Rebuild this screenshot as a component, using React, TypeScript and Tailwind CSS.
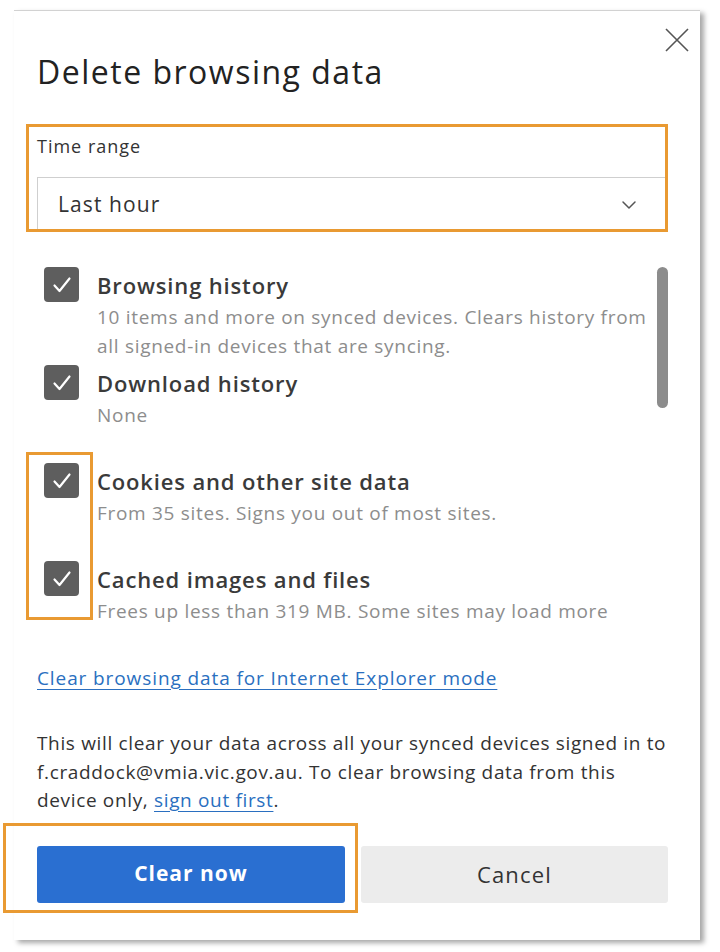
import { ChevronDown } from "lucide-react";

const font = { fontFamily: '"Open Sans", "Noto Sans", sans-serif' };

type Item = { title: string; desc: string[] };

const topItems: Item[] = [
  {
    title: "Browsing history",
    desc: ["10 items and more on synced devices. Clears history from", "all signed-in devices that are syncing."],
  },
  { title: "Download history", desc: ["None"] },
];

const markedItems: Item[] = [
  { title: "Cookies and other site data", desc: ["From 35 sites. Signs you out of most sites."] },
  { title: "Cached images and files", desc: ["Frees up less than 319 MB. Some sites may load more"] },
];

function CheckBox() {
  return (
    <div className="flex h-[35px] w-[35px] shrink-0 items-center justify-center rounded-[4px] bg-[#5e5e5e]">
      <svg width="24" height="24" viewBox="0 0 24 24" fill="none">
        <path d="M4.5 12.5 L9.5 18 L19.5 5.5" stroke="#ffffff" strokeWidth="2.2" strokeLinecap="round" strokeLinejoin="round" />
      </svg>
    </div>
  );
}

function Row({ item }: { item: Item }) {
  return (
    <div className="flex h-[98px] gap-[18px] pl-[7px]">
      <CheckBox />
      <div className="flex flex-col whitespace-nowrap">
        <div className="text-[22px] font-semibold leading-[36px] tracking-[0.85px] text-[#3a3a3a]">{item.title}</div>
        {item.desc.map((line) => (
          <div key={line} className="text-[19px] leading-[29px] tracking-[0.7px] text-[#8d8d8d]">
            {line}
          </div>
        ))}
      </div>
    </div>
  );
}

export default function App() {
  return (
    <div className="min-h-[952px] w-[720px] bg-white pl-[14px] pt-[10px]" style={font}>
      <div className="relative h-[930px] w-[686px] border-t border-[#d2d2d2] bg-white pl-[23px] pr-[32px] shadow-[4px_3px_5px_rgba(0,0,0,0.35)]">
        {/* close */}
        <button className="absolute right-[11px] top-[17px] p-0">
          <svg width="24" height="24" viewBox="0 0 24 24" fill="none">
            <path d="M1 1 L23 23 M23 1 L1 23" stroke="#555" strokeWidth="1.6" />
          </svg>
        </button>

        <h1 className="pt-[41px] text-[32px] font-normal leading-[40px] tracking-[1.5px] text-[#222]">
          Delete browsing data
        </h1>

        {/* Time range */}
        <div className="relative mt-[42px]">
          <div className="text-[18px] leading-[24px] tracking-[1px] text-[#333]">Time range</div>
          <div className="mt-[19px] flex h-[55px] items-center justify-between border border-[#cfcfcf] pl-[20px] pr-[26px]">
            <span className="text-[21px] tracking-[1.1px] text-[#333]">Last hour</span>
            <ChevronDown size={24} strokeWidth={1.5} color="#555" />
          </div>
          <div className="pointer-events-none absolute -left-[11px] -top-[10px] bottom-0 right-0 border-[3px] border-[#e99a32]" />
        </div>

        {/* options */}
        <div className="mt-[35px] flex">
          <div className="flex-1">
            {topItems.map((it) => (
              <Row key={it.title} item={it} />
            ))}
            <div className="relative">
              {markedItems.map((it) => (
                <Row key={it.title} item={it} />
              ))}
              <div className="pointer-events-none absolute -left-[11px] -top-[11px] h-[168px] w-[67px] border-[3px] border-[#e99a32]" />
            </div>
          </div>
          <div className="w-[11px] shrink-0">
            <div className="h-[141px] w-[11px] rounded-full bg-[#8c8c8c]" />
          </div>
        </div>

        <a
          href="#"
          className="mt-[5px] block whitespace-nowrap text-[19px] leading-[29px] tracking-[0.9px] text-[#2a6fc0] underline underline-offset-[4px]"
        >
          Clear browsing data for Internet Explorer mode
        </a>

        <p className="mt-[36px] whitespace-nowrap text-[19px] leading-[28.5px] tracking-[0.65px] text-[#333]">
          This will clear your data across all your synced devices signed in to
          <br />
          f.craddock@vmia.vic.gov.au. To clear browsing data from this
          <br />
          device only,{" "}
          <a href="#" className="text-[#2a6fc0] underline underline-offset-[4px]">
            sign out first
          </a>
          .
        </p>

        {/* actions */}
        <div className="relative mt-[31px] flex gap-[16px]">
          <button className="h-[57px] w-[308px] rounded-[3px] bg-[#2a6fd1] text-[21px] font-bold tracking-[1px] text-white">
            Clear now
          </button>
          <button className="h-[57px] flex-1 rounded-[3px] bg-[#ececec] text-[22px] tracking-[1.2px] text-[#333]">
            Cancel
          </button>
          <div className="pointer-events-none absolute -left-[34px] -top-[23px] h-[90px] w-[355px] border-[3px] border-[#e99a32]" />
        </div>
      </div>
    </div>
  );
}
